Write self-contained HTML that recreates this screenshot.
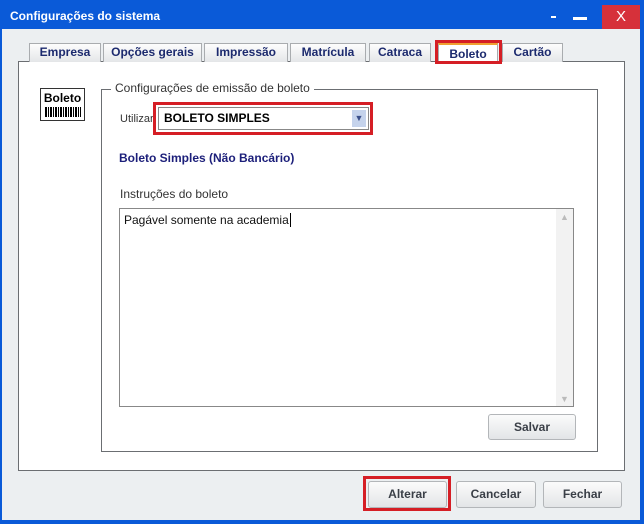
<!DOCTYPE html>
<html><head><meta charset="utf-8"><style>
*{box-sizing:border-box;margin:0;padding:0}
body{width:644px;height:524px;overflow:hidden;font-family:"Liberation Sans",sans-serif;font-size:12px;position:relative;background:#0a5ad8}
.a{position:absolute}
.win{left:2px;top:29px;width:638px;height:491px;background:#eceff1}
.tab{top:43px;height:19px;background:linear-gradient(#fdfdfd,#e4e6e8);border:1px solid #a9acaf;border-bottom:none;font-weight:bold;color:#1c2a6e;text-align:center;line-height:17px;font-size:12px}
.btn{background:linear-gradient(#fbfbfb,#e3e5e7);border:1px solid #b3b6b9;border-radius:3px;text-align:center;color:#3a3f47;font-weight:bold;font-size:12px}
.red{border:3px solid #d51e25}
</style></head><body>
<div class="a" style="left:10px;top:9px;color:#fff;font-weight:bold;font-size:12px">Configurações do sistema</div>
<div class="a" style="left:551px;top:16px;width:5px;height:2px;background:#fff"></div>
<div class="a" style="left:573px;top:17px;width:14px;height:3px;background:#fff"></div>
<div class="a" style="left:602px;top:5px;width:38px;height:24px;background:#d6313a;color:#fff;text-align:center;font-size:15px;line-height:24px">X</div>
<div class="a win"></div>
<div class="a" style="left:18px;top:61px;width:607px;height:410px;background:#fff;border:1px solid #6b6e72"></div>
<div class="a tab" style="left:29px;width:72px">Empresa</div>
<div class="a tab" style="left:103px;width:99px">Opções gerais</div>
<div class="a tab" style="left:204px;width:84px">Impressão</div>
<div class="a tab" style="left:290px;width:76px">Matrícula</div>
<div class="a tab" style="left:369px;width:62px">Catraca</div>
<div class="a tab" style="left:438px;width:60px;top:43px;height:20px;background:#fff;border-top:2px solid #f0a030;line-height:19px">Boleto</div>
<div class="a tab" style="left:502px;width:61px">Cartão</div>
<div class="a red" style="left:435px;top:40px;width:67px;height:24px"></div>
<div class="a" style="left:40px;top:88px;width:45px;height:33px;border:1px solid #333;text-align:center;font-weight:bold;font-size:12px;line-height:14px;padding-top:2px">Boleto<div style="margin:2px auto 0;width:36px;height:10px;background:repeating-linear-gradient(90deg,#000 0 2px,#fff 2px 3px,#000 3px 4px,#fff 4px 5px)"></div></div>
<div class="a" style="left:101px;top:89px;width:497px;height:363px;border:1px solid #6b6e72"></div>
<div class="a" style="left:111px;top:81px;background:#fff;padding:0 4px;color:#333;font-size:12px">Configurações de emissão de boleto</div>
<div class="a" style="left:120px;top:113px;font-size:11px;color:#333">Utilizar</div>
<div class="a red" style="left:153px;top:102px;width:220px;height:33px"></div>
<div class="a" style="left:158px;top:107px;width:211px;height:23px;border:1px solid #888;background:#fff;font-weight:bold;font-size:12px;line-height:21px;padding-left:5px;color:#000">BOLETO SIMPLES</div>
<div class="a" style="left:352px;top:110px;width:14px;height:17px;background:#c5d3ec;color:#3a4f8a;font-size:9px;text-align:center;line-height:17px">▼</div>
<div class="a" style="left:119px;top:151px;color:#1c1f7a;font-weight:bold;font-size:12px">Boleto Simples (Não Bancário)</div>
<div class="a" style="left:120px;top:187px;color:#333">Instruções do boleto</div>
<div class="a" style="left:119px;top:208px;width:455px;height:199px;border:1px solid #888;background:#fff;padding:4px 4px;color:#111"><span style="border-right:1px solid #000;padding-right:1px">Pagável somente na academia</span></div>
<div class="a" style="left:556px;top:209px;width:17px;height:197px;background:#f2f2f2;color:#bbb;font-size:9px;text-align:center">
<div style="margin-top:3px">▲</div><div style="position:absolute;bottom:2px;width:100%">▼</div></div>
<div class="a btn" style="left:488px;top:414px;width:88px;height:26px;line-height:24px">Salvar</div>
<div class="a red" style="left:363px;top:476px;width:88px;height:35px"></div>
<div class="a btn" style="left:368px;top:481px;width:79px;height:27px;line-height:25px">Alterar</div>
<div class="a btn" style="left:456px;top:481px;width:80px;height:27px;line-height:25px">Cancelar</div>
<div class="a btn" style="left:543px;top:481px;width:79px;height:27px;line-height:25px">Fechar</div>
</body></html>
